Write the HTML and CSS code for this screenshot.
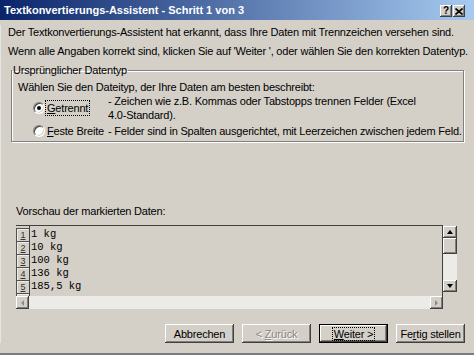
FILE: index.html
```html
<!DOCTYPE html>
<html lang="de">
<head>
  <meta charset="UTF-8">
  <title>Textkonvertierungs-Assistent - Schritt 1 von 3</title>
  <link rel="stylesheet" href="styles.css">
</head>

<body>

  <div class="window">
    <div class="titlebar">
      <span class="title">Textkonvertierungs-Assistent - Schritt 1 von 3</span>
      <span class="caption-buttons">
        <span class="cap-btn">?</span>
        <span class="cap-btn">
          <svg width="8" height="7" viewBox="0 0 8 7">
            <path d="M0.5 0.5 L7.5 6.5 M7.5 0.5 L0.5 6.5" stroke="#000" stroke-width="1.6"/>
          </svg>
        </span>
      </span>
    </div>

    <div class="client">
      <p class="intro">Der Textkonvertierungs-Assistent hat erkannt, dass Ihre Daten mit Trennzeichen versehen sind.</p>
      <p class="intro">Wenn alle Angaben korrekt sind, klicken Sie auf 'Weiter ', oder wählen Sie den korrekten Datentyp.</p>

      <fieldset class="group">
        <legend>Ursprünglicher Datentyp</legend>
        <p class="group-hint">Wählen Sie den Dateityp, der Ihre Daten am besten beschreibt:</p>
        <div class="options">
          <label class="option">
            <span class="radio checked"></span>
            <span class="focus"><u>G</u>etrennt</span>
          </label>
          <span class="option-desc">- Zeichen wie z.B. Kommas oder Tabstopps trennen Felder (Excel 4.0-Standard).</span>

          <label class="option">
            <span class="radio"></span>
            <span class="plain"><u>F</u>este Breite</span>
          </label>
          <span class="option-desc wide">- Felder sind in Spalten ausgerichtet, mit Leerzeichen zwischen jedem Feld.</span>
        </div>
      </fieldset>

      <p class="preview-label">Vorschau der markierten Daten:</p>

      <div class="preview">
        <div class="preview-data">
          <div class="row-nums">
            <span class="row-num"><u>1</u></span>
            <span class="row-num"><u>2</u></span>
            <span class="row-num"><u>3</u></span>
            <span class="row-num"><u>4</u></span>
            <span class="row-num"><u>5</u></span>
            <span class="row-num"></span>
          </div>
          <div class="cells">
            <span class="cell">1 kg</span>
            <span class="cell">10 kg</span>
            <span class="cell">100 kg</span>
            <span class="cell">136 kg</span>
            <span class="cell">185,5 kg</span>
          </div>
        </div>

        <div class="vscroll">
          <span class="scroll-btn"><span class="arrow up"></span></span>
          <span class="scroll-thumb"></span>
          <span class="scroll-track"></span>
          <span class="scroll-btn"><span class="arrow down"></span></span>
        </div>

        <div class="hscroll">
          <span class="scroll-btn"><span class="arrow left"></span></span>
          <span class="scroll-track"></span>
          <span class="scroll-btn"><span class="arrow right"></span></span>
        </div>
        <div class="corner"></div>
      </div>

      <div class="buttons">
        <button class="btn">Abbrechen</button>
        <button class="btn" disabled>&lt; <u>Z</u>urück</button>
        <button class="btn default"><span class="focus"><u>W</u>eiter &gt;</span></button>
        <button class="btn">Fe<u>r</u>tig stellen</button>
      </div>
    </div>
  </div>

</body>
</html>
```

FILE: styles.css
```css
body {
  margin: 0;
  font-family: 'Liberation Sans', Arial, sans-serif;
  font-size: 11px;
  letter-spacing: -0.2px;
  color: #000;
  background-color: #d4d0c8;
}

.window {
  width: 474px;
  height: 355px;
  box-sizing: border-box;
  background-color: #d4d0c8;
  border-bottom: 2px solid #7c7c7c;
  overflow: hidden;
}

/* Titelleiste */
.titlebar {
  height: 20px;
  display: flex;
  align-items: center;
  justify-content: space-between;
  padding: 0 9px 0 4px;
  background: linear-gradient(to right, #0a246a, #a6caf0);
}

.title {
  color: white;
  font-weight: bold;
  font-size: 11px;
  letter-spacing: 0;
}

.caption-buttons {
  display: flex;
  gap: 1px;
  margin-top: 2px;
}

.cap-btn {
  width: 12px;
  height: 12px;
  display: flex;
  align-items: center;
  justify-content: center;
  background-color: #d4d0c8;
  font-weight: bold;
  font-size: 10px;
  line-height: 1;
  letter-spacing: 0;
  box-shadow: inset -1px -1px #404040, inset 1px 1px #fff, inset -2px -2px #808080;
}

/* Inhalt */
.client {
  padding: 0 9px 0 7px;
  border-left: 1px solid #e6e4de;
}

.intro {
  margin: 5px 0 0;
  line-height: 14px;
  white-space: nowrap;
}

.group {
  margin: 5px 1px 0 3px;
  padding: 0 0 3px;
  border: 1px solid #808080;
  box-shadow: inset 1px 1px #fff, 1px 1px #fff;
  min-width: 0;
}

.group legend {
  padding: 0 1px;
  line-height: 14px;
}

.group-hint {
  margin: 3px 0 0 6px;
  line-height: 14px;
}

.options {
  display: grid;
  grid-template-columns: 75px auto;
  row-gap: 2px;
  padding-left: 21px;
  line-height: 14px;
}

.option {
  display: flex;
  align-items: center;
  gap: 1px;
  align-self: center;
  white-space: nowrap;
}

.option-desc {
  max-width: 312px;
}

.option-desc.wide {
  max-width: none;
  white-space: nowrap;
}

.radio {
  position: relative;
  flex: none;
  width: 12px;
  height: 12px;
  box-sizing: border-box;
  border-radius: 50%;
  border: 1px solid;
  border-color: #808080 #fff #fff #808080;
  background: white;
  box-shadow: inset 1px 1px #404040, inset -1px -1px #d4d0c8;
}

.radio.checked::after {
  content: "";
  position: absolute;
  left: 3px;
  top: 3px;
  width: 4px;
  height: 4px;
  border-radius: 50%;
  background: #000;
}

.focus {
  outline: 1px dotted #000;
  padding: 0 1px;
}

.plain {
  padding: 0 1px;
}

/* Vorschau */
.preview-label {
  margin: 62px 0 0 8px;
  line-height: 14px;
}

.preview {
  margin: 7px 0 0 8px;
  display: grid;
  grid-template-columns: 427px 14px;
  grid-template-rows: 71px 13px;
}

.preview-data {
  display: flex;
  overflow: hidden;
  border-top: 1px solid #404040;
  border-right: 1px solid #404040;
  padding-top: 2px;
}

.row-nums {
  display: flex;
  flex-direction: column;
  width: 13px;
  border-right: 1px solid #404040;
  margin-top: -2px;
  padding-top: 2px;
}

.row-num {
  flex: none;
  height: 13px;
  box-sizing: border-box;
  border-top: 1px solid #505050;
  border-left: 1px solid #505050;
  box-shadow: inset 1px 1px #eeece8;
  font-size: 9px;
  line-height: 12px;
  letter-spacing: 0;
  text-align: center;
  color: #333;
}

.cells {
  display: flex;
  flex-direction: column;
  padding-left: 1px;
  font-family: 'Liberation Mono', 'Courier New', monospace;
  font-size: 10.5px;
  letter-spacing: 0;
}

.cell {
  height: 13px;
  line-height: 13px;
  white-space: pre;
}

.vscroll {
  display: flex;
  flex-direction: column;
  margin-top: 1px;
  height: 66px;
}

.hscroll {
  display: flex;
  background-color: #eae8e3;
}

.corner {
  background-color: #d4d0c8;
}

.scroll-btn,
.scroll-thumb {
  flex: none;
  display: flex;
  align-items: center;
  justify-content: center;
  width: 14px;
  height: 12px;
  box-sizing: border-box;
  background-color: #d4d0c8;
  box-shadow: inset -1px -1px #404040, inset 1px 1px #fff, inset -2px -2px #808080;
}

.hscroll .scroll-btn {
  width: 13px;
  height: 13px;
}

.scroll-thumb {
  height: 16px;
}

.scroll-track {
  flex: 1;
  background-color: #ecebe7;
}

.arrow {
  width: 0;
  height: 0;
  border: 3px solid transparent;
}

.arrow.up {
  border-bottom: 4px solid #000;
  border-top: none;
}

.arrow.down {
  border-top: 4px solid #000;
  border-bottom: none;
}

.arrow.left {
  border-right: 3px solid #8a8a8a;
  border-left: none;
}

.arrow.right {
  border-left: 3px solid #8a8a8a;
  border-right: none;
}

/* Schaltflächen */
.buttons {
  display: flex;
  justify-content: flex-end;
  gap: 8px;
  margin-top: 15px;
}

.btn {
  width: 69px;
  height: 19px;
  padding: 0;
  border: none;
  background-color: #d4d0c8;
  font-family: 'Liberation Sans', Arial, sans-serif;
  font-size: 11px;
  letter-spacing: -0.2px;
  color: #000;
  box-shadow: inset -1px -1px #404040, inset 1px 1px #fff, inset -2px -2px #808080;
}

.btn.default {
  box-shadow: inset 0 0 0 1px #000, inset -2px -2px #404040, inset 2px 2px #fff, inset -3px -3px #808080;
}

.btn:disabled {
  color: #8a877f;
  text-shadow: 1px 1px #fff;
}
```
